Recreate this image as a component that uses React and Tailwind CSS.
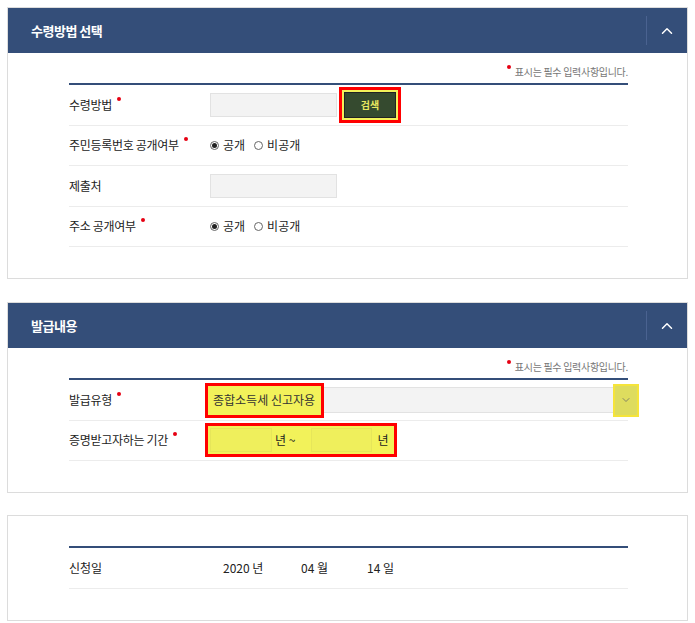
import { ChevronUp, ChevronDown } from "lucide-react";

const FONT = { fontFamily: '"Noto Sans CJK KR", "Noto Sans", sans-serif' };

const Req = () => <span className="relative -top-[9px] ml-[5px] inline-block h-[4px] w-[4px] rounded-full bg-[#e60012]" />;

function Panel({ title, note = true, children }) {
  return (
    <div className="mx-[7px] border border-[#dcdcdc] bg-white">
      {title && (
        <div className="flex h-[45px] items-center justify-between bg-[#344e79]">
          <div className="pl-[23px] text-[13px] font-bold tracking-[-0.5px] text-white">{title}</div>
          <div className="flex h-full items-center">
            <div className="h-[29px] w-px bg-[#4a6290]" />
            <div className="flex w-[40px] justify-center">
              <ChevronUp size={18} strokeWidth={2} className="text-white" />
            </div>
          </div>
        </div>
      )}
      <div className="pb-[31px] pl-[61px] pr-[59px] pt-[6px]">
        <div className="flex h-[24px] items-center justify-end text-[10px] tracking-[-0.3px] text-[#777]">
          {note && (
            <>
              <span className="relative -top-[4px] mr-[4px] inline-block h-[4px] w-[4px] rounded-full bg-[#e60012]" />
              표시는 필수 입력사항입니다.
            </>
          )}
        </div>
        <div className="h-[2px] bg-[#344e79]" />
        {children}
      </div>
    </div>
  );
}

function Row({ label, req, children }) {
  return (
    <div className="flex h-[40.5px] items-center border-b border-[#ececec] text-[12px] text-[#222]">
      <div className="w-[141px] shrink-0 tracking-[-0.3px]">
        {label}
        {req && <Req />}
      </div>
      <div className="flex flex-1 items-center">{children}</div>
    </div>
  );
}

const Radio = ({ checked }) => (
  <span className="mr-[4px] inline-flex h-[9px] w-[9px] items-center justify-center rounded-full border border-[#666] bg-white">
    {checked && <span className="h-[5px] w-[5px] rounded-full bg-[#222]" />}
  </span>
);

const Radios = () => (
  <div className="flex items-center text-[12px]">
    <Radio checked />
    <span>공개</span>
    <span className="ml-[9px]" />
    <Radio />
    <span>비공개</span>
  </div>
);

const Input = ({ w = "w-[127px]", cls = "bg-[#f3f3f3] border-[#e2e2e2]" }) => (
  <div className={`h-[24px] shrink-0 ${w} border ${cls}`} />
);

export default function App() {
  return (
    <div className="min-h-[623px] bg-white pt-[7px]" style={FONT}>
      <Panel title="수령방법 선택">
        <Row label="수령방법" req>
          <Input />
          <div className="ml-[2px] border-[3px] border-[#ff0000]">
            <div className="border-[2px] border-[#f2f25a] bg-[#f2f25a]">
              <div className="flex h-[26px] w-[52px] items-center justify-center border border-[#222] bg-[#354a2f] text-[10px] font-bold text-[#e8e860]">검색</div>
            </div>
          </div>
        </Row>
        <Row label="주민등록번호 공개여부" req>
          <Radios />
        </Row>
        <Row label="제출처">
          <Input />
        </Row>
        <Row label="주소 공개여부" req>
          <Radios />
        </Row>
      </Panel>

      <div className="h-[23px]" />

      <Panel title="발급내용">
        <Row label="발급유형" req>
          <div className="relative flex h-[26px] flex-1 items-center border border-[#e2e2e2] bg-[#f3f3f3]">
            <div className="absolute -left-[6px] -top-[5px] flex h-[35px] w-[119px] items-center whitespace-nowrap border-[3px] border-[#ff0000] bg-[#f2f25a] pl-[5px] text-[12px] text-[#333]">
              종합소득세 신고자용
            </div>
            <div className="absolute -right-[12px] -top-[4px] flex h-[33px] w-[26px] items-center justify-center border-2 border-[#f5e43a] bg-[#dedc5e]">
              <ChevronDown size={12} strokeWidth={1.5} className="text-[#666]" />
            </div>
          </div>
        </Row>
        <Row label="증명받고자하는 기간" req>
          <div className="-ml-[5px] flex h-[34px] w-[192px] items-center whitespace-nowrap border-[3px] border-[#ff0000] bg-[#f2f25a] pl-[2px] text-[12px]">
            <Input w="w-[62px]" cls="bg-[#efef5c] border-[#e6e65a]" />
            <span className="ml-[3px] mr-[16px]">년 ~</span>
            <Input w="w-[61px]" cls="bg-[#efef5c] border-[#e6e65a]" />
            <span className="ml-[5px]">년</span>
          </div>
        </Row>
      </Panel>

      <div className="h-[22px]" />

      <Panel note={false}>
        <div className="flex h-[40.5px] items-center border-b border-[#ececec] text-[12px] text-[#222]">
          <div className="w-[154px] shrink-0">신청일</div>
          <div className="w-[78px]">2020 년</div>
          <div className="w-[66px]">04 월</div>
          <div>14 일</div>
        </div>
      </Panel>
    </div>
  );
}
